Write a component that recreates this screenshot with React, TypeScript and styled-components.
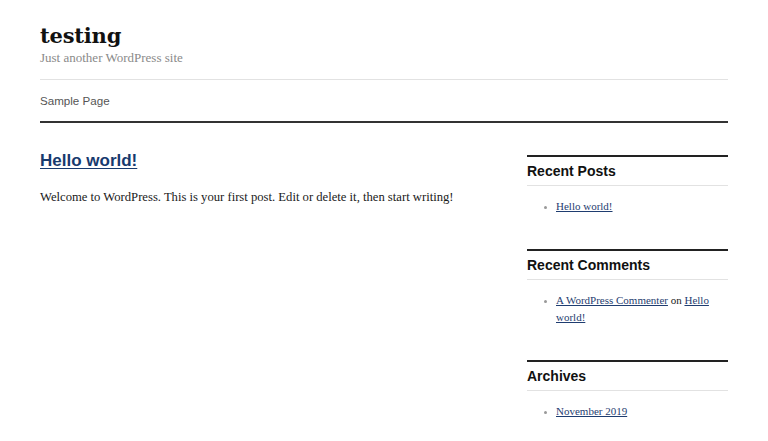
import React from "react";
import styled, { createGlobalStyle } from "styled-components";

const Global = createGlobalStyle`
  html, body { margin: 0; padding: 0; background: #fff; }
  body { font-family: "Liberation Serif", "DejaVu Serif", serif; color: #222; }
`;

const Page = styled.div`
  padding: 0 40px;
  width: 688px;
`;

const Header = styled.header`
  padding: 21px 0 14px;
`;

const SiteTitle = styled.h1`
  margin: 0;
  font-family: "DejaVu Serif", serif;
  font-weight: 700;
  font-size: 21px;
  line-height: 30px;
  color: #111;
  letter-spacing: -0.2px;
`;

const Tagline = styled.p`
  margin: 0;
  font-family: "Liberation Serif", serif;
  font-size: 13px;
  line-height: 14px;
  color: #8a8a8a;
`;

const Rule = styled.div<{ $thick?: boolean }>`
  height: ${(p) => (p.$thick ? "2px" : "1px")};
  background: ${(p) => (p.$thick ? "#333" : "#e2e2e2")};
`;

const Nav = styled.nav`
  display: flex;
  align-items: center;
  height: 41px;
  font-family: "Liberation Sans", sans-serif;
  font-size: 11.6px;
  color: #555;
`;

const Main = styled.div`
  display: grid;
  grid-template-columns: 1fr 201px;
  column-gap: 47px;
`;

const Content = styled.article`
  padding-top: 28px;
`;

const PostTitle = styled.a`
  display: inline-block;
  font-family: "Liberation Sans", sans-serif;
  font-weight: 700;
  font-size: 17px;
  line-height: 20px;
  color: #173a6e;
  text-decoration: underline;
  text-underline-offset: 2px;
`;

const Body = styled.p`
  margin: 17px 0 0;
  font-family: "Liberation Serif", serif;
  font-size: 12.65px;
  line-height: 18px;
  color: #1a1a1a;
`;

const Sidebar = styled.aside`
  padding-top: 32px;
  display: flex;
  flex-direction: column;
`;

const Widget = styled.section`
  border-top: 2px solid #222;
  margin-bottom: 34px;
`;

const WidgetTitle = styled.h2`
  margin: 0;
  padding: 6px 0 6px;
  font-family: "Liberation Sans", sans-serif;
  font-weight: 700;
  font-size: 14px;
  line-height: 16px;
  color: #111;
  border-bottom: 1px solid #e2e2e2;
`;

const List = styled.ul`
  margin: 12px 0 0;
  padding: 0 0 0 29px;
  font-family: "Liberation Serif", serif;
  font-size: 11px;
  line-height: 17px;
  color: #222;
  li::marker { color: #999; font-size: 9px; }
`;

const Link = styled.a`
  color: #1f3d70;
  text-decoration: underline;
`;

export default function App() {
  return (
    <>
      <Global />
      <Page>
        <Header>
          <SiteTitle>testing</SiteTitle>
          <Tagline>Just another WordPress site</Tagline>
        </Header>
        <Rule />
        <Nav>Sample Page</Nav>
        <Rule $thick />
        <Main>
          <Content>
            <PostTitle>Hello world!</PostTitle>
            <Body>
              Welcome to WordPress. This is your first post. Edit or delete it, then start writing!
            </Body>
          </Content>
          <Sidebar>
            <Widget>
              <WidgetTitle>Recent Posts</WidgetTitle>
              <List>
                <li><Link>Hello world!</Link></li>
              </List>
            </Widget>
            <Widget>
              <WidgetTitle>Recent Comments</WidgetTitle>
              <List>
                <li>
                  <Link>A WordPress Commenter</Link> on <Link>Hello world!</Link>
                </li>
              </List>
            </Widget>
            <Widget>
              <WidgetTitle>Archives</WidgetTitle>
              <List>
                <li><Link>November 2019</Link></li>
              </List>
            </Widget>
          </Sidebar>
        </Main>
      </Page>
    </>
  );
}
